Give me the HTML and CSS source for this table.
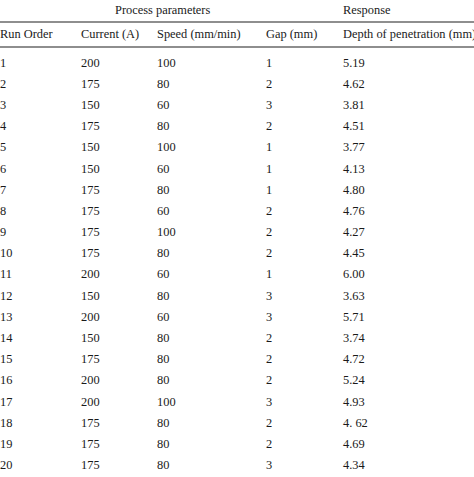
FILE: index.html
```html
<!DOCTYPE html>
<html>
<head>
<meta charset="utf-8">
<link rel="stylesheet" href="styles.css">
</head>
<body>
<div class="table">
  <div class="group-row">
    <div class="group process">Process parameters</div>
    <div class="group response">Response</div>
  </div>
  <div class="head-row row">
    <div>Run Order</div><div>Current (A)</div><div>Speed (mm/min)</div><div>Gap (mm)</div><div>Depth of penetration (mm)</div>
  </div>
  <div class="body">
    <div class="row"><div>1</div><div>200</div><div>100</div><div>1</div><div>5.19</div></div>
    <div class="row"><div>2</div><div>175</div><div>80</div><div>2</div><div>4.62</div></div>
    <div class="row"><div>3</div><div>150</div><div>60</div><div>3</div><div>3.81</div></div>
    <div class="row"><div>4</div><div>175</div><div>80</div><div>2</div><div>4.51</div></div>
    <div class="row"><div>5</div><div>150</div><div>100</div><div>1</div><div>3.77</div></div>
    <div class="row"><div>6</div><div>150</div><div>60</div><div>1</div><div>4.13</div></div>
    <div class="row"><div>7</div><div>175</div><div>80</div><div>1</div><div>4.80</div></div>
    <div class="row"><div>8</div><div>175</div><div>60</div><div>2</div><div>4.76</div></div>
    <div class="row"><div>9</div><div>175</div><div>100</div><div>2</div><div>4.27</div></div>
    <div class="row"><div>10</div><div>175</div><div>80</div><div>2</div><div>4.45</div></div>
    <div class="row"><div>11</div><div>200</div><div>60</div><div>1</div><div>6.00</div></div>
    <div class="row"><div>12</div><div>150</div><div>80</div><div>3</div><div>3.63</div></div>
    <div class="row"><div>13</div><div>200</div><div>60</div><div>3</div><div>5.71</div></div>
    <div class="row"><div>14</div><div>150</div><div>80</div><div>2</div><div>3.74</div></div>
    <div class="row"><div>15</div><div>175</div><div>80</div><div>2</div><div>4.72</div></div>
    <div class="row"><div>16</div><div>200</div><div>80</div><div>2</div><div>5.24</div></div>
    <div class="row"><div>17</div><div>200</div><div>100</div><div>3</div><div>4.93</div></div>
    <div class="row"><div>18</div><div>175</div><div>80</div><div>2</div><div>4. 62</div></div>
    <div class="row"><div>19</div><div>175</div><div>80</div><div>2</div><div>4.69</div></div>
    <div class="row"><div>20</div><div>175</div><div>80</div><div>3</div><div>4.34</div></div>
  </div>
</div>
</body>
</html>
```
FILE: styles.css
```css
html, body {
  margin: 0;
  padding: 0;
  background: #ffffff;
  overflow: hidden;
}
body {
  width: 474px;
  height: 477px;
  font-family: "Liberation Serif", "Times New Roman", serif;
  font-size: 12.4px;
  color: #1a1a1a;
}
.table {
  width: 474px;
  white-space: nowrap;
}
.group-row {
  display: grid;
  grid-template-columns: 343px 1fr;
  height: 21px;
  align-items: center;
  border-bottom: 2px solid #8e8e8e;
}
.group.process {
  padding-left: 115px;
}
.row {
  display: grid;
  grid-template-columns: 81px 76px 109px 77px 131px;
  height: 21.2px;
  align-items: center;
}
.head-row {
  height: 23px;
  border-bottom: 2px solid #8e8e8e;
}
.body {
  padding-top: 4.5px;
}
```
